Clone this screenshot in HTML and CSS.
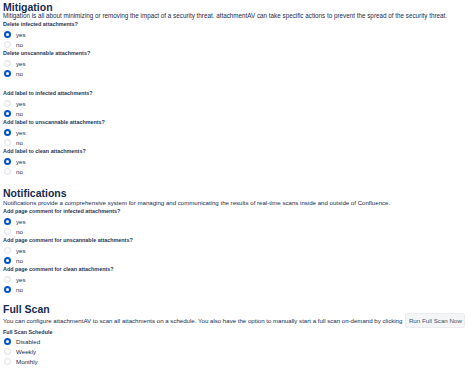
FILE: index.html
```html
<!DOCTYPE html>
<html>
<head>
<meta charset="utf-8">
<link rel="stylesheet" href="styles.css">
</head>
<body>
<section class="sec first">
  <h2>Mitigation</h2>
  <p class="desc wide">Mitigation is all about minimizing or removing the impact of a security threat. attachmentAV can take specific actions to prevent the spread of the security threat.</p>
  <div class="group">
    <div class="q">Delete infected attachments?</div>
    <div class="opt"><span class="radio on"></span>yes</div>
    <div class="opt"><span class="radio"></span>no</div>
  </div>
  <div class="group">
    <div class="q">Delete unscannable attachments?</div>
    <div class="opt"><span class="radio"></span>yes</div>
    <div class="opt"><span class="radio on"></span>no</div>
  </div>
  <div class="group gap">
    <div class="q">Add label to infected attachments?</div>
    <div class="opt"><span class="radio"></span>yes</div>
    <div class="opt"><span class="radio on"></span>no</div>
  </div>
  <div class="group">
    <div class="q">Add label to unscannable attachments?</div>
    <div class="opt"><span class="radio on"></span>yes</div>
    <div class="opt"><span class="radio"></span>no</div>
  </div>
  <div class="group">
    <div class="q">Add label to clean attachments?</div>
    <div class="opt"><span class="radio on"></span>yes</div>
    <div class="opt"><span class="radio"></span>no</div>
  </div>
</section>
<section class="sec">
  <h2>Notifications</h2>
  <p class="desc">Notifications provide a comprehensive system for managing and communicating the results of real-time scans inside and outside of Confluence.</p>
  <div class="group">
    <div class="q">Add page comment for infected attachments?</div>
    <div class="opt"><span class="radio on"></span>yes</div>
    <div class="opt"><span class="radio"></span>no</div>
  </div>
  <div class="group">
    <div class="q">Add page comment for unscannable attachments?</div>
    <div class="opt"><span class="radio"></span>yes</div>
    <div class="opt"><span class="radio on"></span>no</div>
  </div>
  <div class="group">
    <div class="q">Add page comment for clean attachments?</div>
    <div class="opt"><span class="radio"></span>yes</div>
    <div class="opt"><span class="radio on"></span>no</div>
  </div>
</section>
<section class="sec last">
  <h2>Full Scan</h2>
  <div class="desc-row">
    <span>You can configure attachmentAV to scan all attachments on a schedule. You also have the option to manually start a full scan on-demand by clicking</span>
    <button class="btn">Run Full Scan Now</button>
  </div>
  <div class="group">
    <div class="q">Full Scan Schedule</div>
    <div class="opt"><span class="radio on"></span>Disabled</div>
    <div class="opt"><span class="radio"></span>Weekly</div>
    <div class="opt"><span class="radio"></span>Monthly</div>
  </div>
</section>
</body>
</html>
```
FILE: styles.css
```css
html, body {
  margin: 0;
  padding: 0;
  background: #ffffff;
}
body {
  font-family: "Liberation Sans", Arial, sans-serif;
  color: #172b4d;
  padding: 1px 3px 0 3px;
}
.sec {
  margin-top: 11px;
}
.sec.first {
  margin-top: 0;
}
.sec.last {
  margin-top: 9px;
}
h2 {
  margin: 0;
  font-size: 10.5px;
  line-height: 12px;
  font-weight: bold;
  color: #172b4d;
}
.desc {
  margin: -1px 0 0 0;
  font-size: 6.1px;
  line-height: 9px;
  white-space: nowrap;
}
.desc.wide {
  font-size: 6.3px;
}
.first .desc {
  margin-top: -2px;
}
.group.gap {
  margin-top: 11px;
}
.q {
  font-size: 5.4px;
  line-height: 9px;
  font-weight: bold;
  color: #253858;
}
.opt {
  display: flex;
  align-items: center;
  height: 10px;
  font-size: 6.2px;
  color: #172b4d;
}
.radio {
  box-sizing: border-box;
  width: 7px;
  height: 7px;
  border-radius: 50%;
  border: 1px solid #dfe1e6;
  background: #fafbfc;
  margin: 0 5px 0 1px;
  flex: none;
}
.radio.on {
  border: 2.2px solid #0052cc;
  background: #ffffff;
}
.desc-row {
  display: flex;
  align-items: center;
  height: 15px;
  margin-top: -2.5px;
  font-size: 6.1px;
  white-space: nowrap;
}
.btn {
  margin-left: 3px;
  height: 15px;
  width: 60px;
  padding: 0;
  border: 1px solid #ebecf0;
  border-radius: 2px;
  background: #f4f5f7;
  color: #42526e;
  font-family: "Liberation Sans", Arial, sans-serif;
  font-size: 6.2px;
}
```
